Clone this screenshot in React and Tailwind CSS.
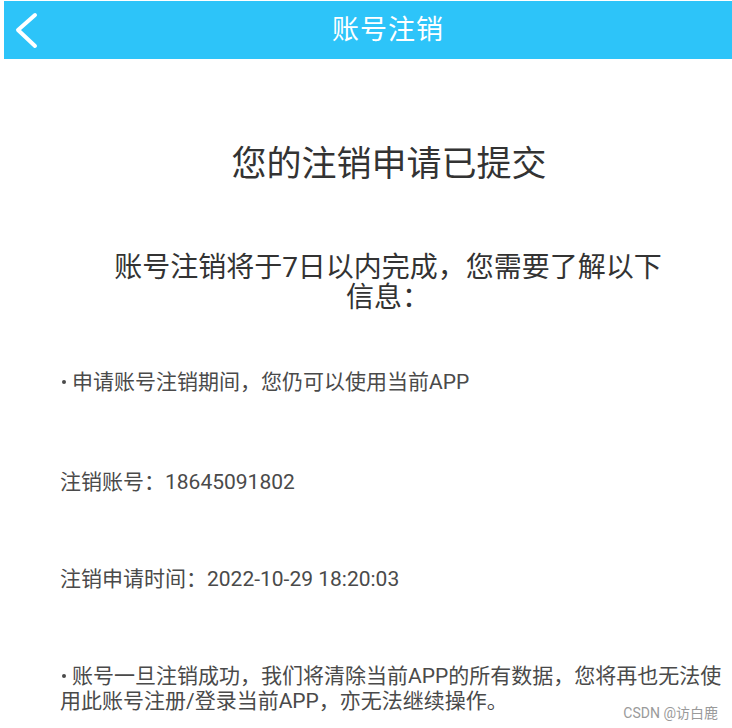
import React from 'react'

const font = { fontFamily: "Roboto, 'Noto Sans CJK SC', sans-serif" }

const BackIcon = () => (
  <svg width="28" height="40" viewBox="0 0 28 40" fill="none">
    <path d="M23 4 L6 19 L23 35" stroke="white" strokeWidth="4" strokeLinecap="round" strokeLinejoin="round" />
  </svg>
)

const Dot = () => (
  <span className="inline-block w-[4px] h-[4px] rounded-full bg-[#4a4a4a] align-middle ml-[2px] mr-[6px] -mt-[3px]" />
)

export default function App() {
  return (
    <div className="relative w-[732px] h-[728px] bg-white overflow-hidden" style={font}>
      <div className="flex items-center h-[58px] mt-[1px] ml-[4px] bg-[#2dc4f9]">
        <div className="w-[40px] pl-[8px] pt-[1px] flex items-center">
          <BackIcon />
        </div>
        <div className="flex-1 text-center text-white text-[27px] leading-[58px] tracking-[1px]">账号注销</div>
      </div>

      <div className="w-[670px] ml-[60px]">
        <h1 className="mt-[86px] pr-[12px] text-center text-[35px] leading-[40px] text-[#333]">您的注销申请已提交</h1>
        <p className="mt-[68px] ml-[50px] mr-[64px] text-center text-[28px] leading-[30px] text-[#333]">
          账号注销将于7日以内完成，您需要了解以下信息：
        </p>
        <div className="text-[21px] leading-[25px] text-[#4a4a4a]">
          <p className="mt-[57px]"><Dot />申请账号注销期间，您仍可以使用当前APP</p>
          <p className="mt-[75px]">注销账号：18645091802</p>
          <p className="mt-[72px]">注销申请时间：2022-10-29 18:20:03</p>
          <p className="mt-[72px]"><Dot />账号一旦注销成功，我们将清除当前APP的所有数据，您将再也无法使用此账号注册/登录当前APP，亦无法继续操作。</p>
        </div>
      </div>

      <div className="absolute right-[14px] bottom-[6px] text-[14px] leading-[18px] text-[#9a9a9a]">CSDN @访白鹿</div>
    </div>
  )
}
